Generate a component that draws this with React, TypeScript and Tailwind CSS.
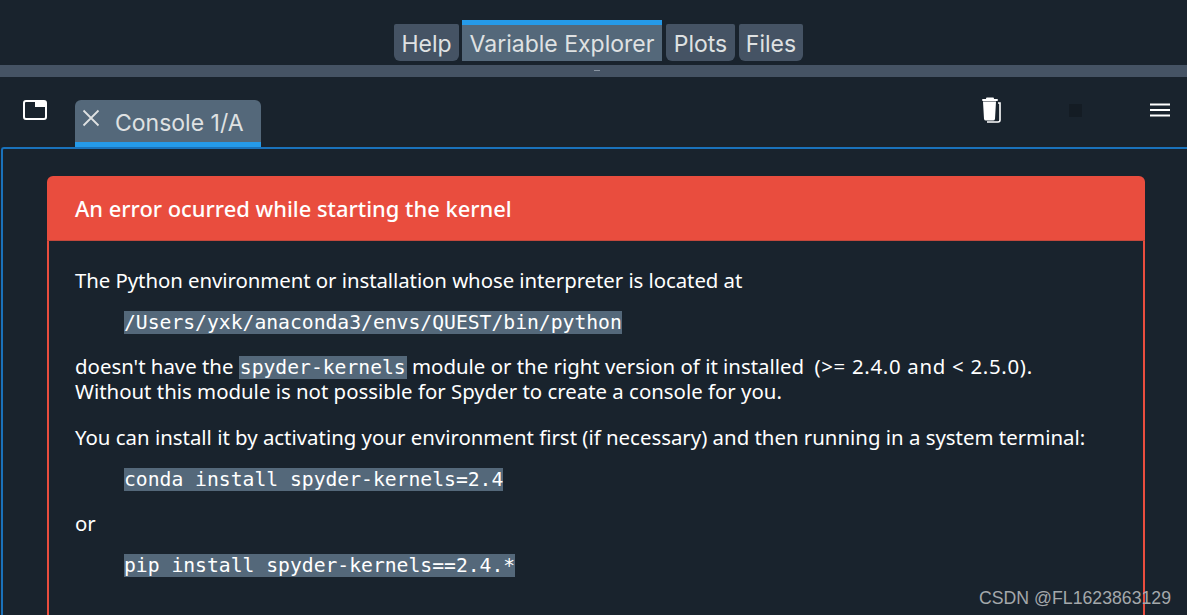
function Tab({ label, className }: { label: string; className: string }) {
  return (
    <div className={`h-[37px] flex items-center justify-center rounded-b-[6px] rounded-t-[2px] bg-[#455364] pt-[3px] text-[23px] text-[#dfe1e2] ${className}`}>
      {label}
    </div>
  );
}

function Code({ children, className = "" }: { children: string; className?: string }) {
  return (
    <span className={`bg-[#54687a] font-['DejaVu_Sans_Mono',monospace] text-[19.7px] leading-[23px] inline-block text-white ${className}`}>
      {children}
    </span>
  );
}

function WindowIcon() {
  return (
    <svg width="24" height="20" viewBox="0 0 24 20" fill="none">
      <rect x="1" y="1" width="22" height="18" rx="2" stroke="white" strokeWidth="2" />
      <rect x="12" y="1" width="11" height="6" fill="white" />
    </svg>
  );
}

function TrashIcon() {
  return (
    <svg width="20" height="26" viewBox="0 0 20 26" fill="none">
      <path d="M1 4.5h13l-1 17.5a2 2 0 0 1-2 1.5H4a2 2 0 0 1-2-1.5z" fill="white" />
      <path d="M1 3h14M5 1.5h6" stroke="white" strokeWidth="2" strokeLinecap="round" />
      <path d="M5 25h11a2 2 0 0 0 2-2V6h-2" stroke="white" strokeWidth="1.6" fill="none" />
    </svg>
  );
}

function MenuIcon() {
  return (
    <svg width="20" height="14" viewBox="0 0 20 14" fill="none">
      <path d="M0 1.5h20M0 7h20M0 12.5h20" stroke="white" strokeWidth="2.2" />
    </svg>
  );
}

export default function App() {
  return (
    <div className="relative h-[615px] w-[1187px] overflow-hidden bg-[#19232d] font-['Noto_Sans',sans-serif] text-white">
      <div className="flex h-[65px] items-end justify-start gap-[3px] pb-[4px] pl-[394px] font-['Inter',sans-serif]">
        <Tab label="Help" className="w-[65px]" />
        <div className="flex h-[41px] w-[200px] flex-col">
          <div className="h-[5px] bg-[#259ae9]" />
          <div className="flex flex-1 items-center justify-center bg-[#54687a] pt-[2px] text-[23px] text-[#dfe1e2]">
            Variable Explorer
          </div>
        </div>
        <Tab label="Plots" className="ml-[1px] w-[69px]" />
        <Tab label="Files" className="ml-[1px] w-[64px]" />
      </div>

      <div className="flex h-[12px] justify-center bg-[#455364] pl-[7px] pt-[5px]">
        <div className="h-px w-[6px] bg-[#8a96a3]" />
      </div>

      <div className="flex h-[70px] items-start">
        <div className="ml-[23px] mt-[23px] w-[52px]">
          <WindowIcon />
        </div>
        <div className="mt-[23px] flex h-[47px] w-[186px] flex-col overflow-hidden rounded-t-[6px] bg-[#54687a] font-['Inter',sans-serif]">
          <div className="flex flex-1 items-center pl-[7px] pt-[5px] text-[23px] text-[#dfe1e2]">
            <span className="mb-[12px] mr-[15px] flex">
              <svg width="18" height="18" viewBox="0 0 18 18" fill="none">
                <path d="M1.5 1.5l15 15M16.5 1.5l-15 15" stroke="#dfe1e2" strokeWidth="1.8" />
              </svg>
            </span>
            Console 1/A
          </div>
          <div className="h-[5px] bg-[#259ae9]" />
        </div>
        <div className="ml-[721px] mt-[20px]">
          <TrashIcon />
        </div>
        <div className="ml-[67px] mt-[27px] h-[13px] w-[13px] bg-[#141c24]" />
        <div className="ml-[68px] mt-[26px]">
          <MenuIcon />
        </div>
      </div>

      <div className="ml-px h-[468px] rounded-tl-[3px] border-l-2 border-t-2 border-[#1a72bb] pl-[44px] pt-[27px]">
        <div className="w-[1098px] overflow-hidden rounded-t-[6px]">
          <div className="flex h-[65px] items-center border-b border-[#c4483c] bg-[#e94d3e] pl-[28px] pt-[2px] text-[21.9px] font-medium">
            An error ocurred while starting the kernel
          </div>
          <div className="h-[400px] border-x-2 border-[#e94d3e] pl-[26px] pt-[27px] text-[20.4px] leading-[25px]">
            <p className="tracking-[-0.06px]">The Python environment or installation whose interpreter is located at</p>
            <p className="ml-[49px] mt-[16px]">
              <Code>/Users/yxk/anaconda3/envs/QUEST/bin/python</Code>
            </p>
            <p className="mt-[20px]">
              doesn't have the{" "}
              <Code className="px-px">spyder-kernels</Code>{" "}
              module or the right version of it installed{" "}
              <span className="ml-[5px] tracking-[0.7px]">(&gt;= 2.4.0 and &lt; 2.5.0).</span>
              <br />
              Without this module is not possible for Spyder to create a console for you.
            </p>
            <p className="mt-[21px]">
              You can install it by activating your environment first (if necessary) and then running in a system terminal:
            </p>
            <p className="ml-[49px] mt-[16px]">
              <Code>conda install spyder-kernels=2.4</Code>
            </p>
            <p className="mt-[20px]">or</p>
            <p className="ml-[49px] mt-[16px]">
              <Code>pip install spyder-kernels==2.4.*</Code>
            </p>
          </div>
        </div>
      </div>

      <div className="absolute left-[979px] top-[587px] font-['Liberation_Sans',sans-serif] text-[17.7px] leading-[22px] text-[#a4a8ab]">
        CSDN @FL1623863129
      </div>
    </div>
  );
}
